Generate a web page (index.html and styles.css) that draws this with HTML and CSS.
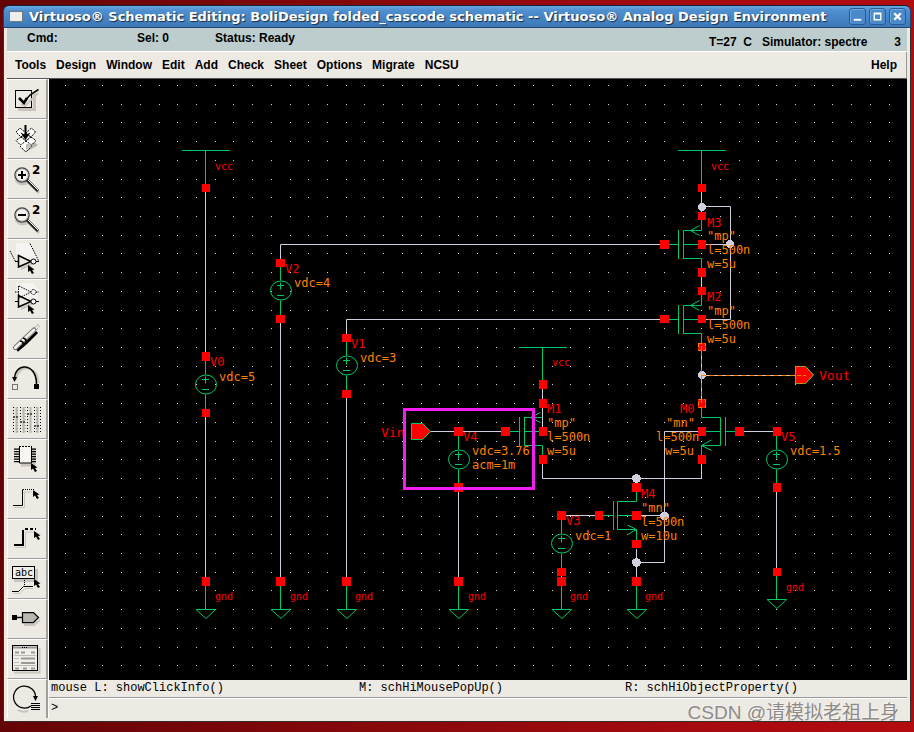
FILE: index.html
```html
<!DOCTYPE html>
<html lang="en">
<head>
<meta charset="utf-8">
<title>Virtuoso Schematic Editing</title>
<link rel="stylesheet" href="styles.css">
</head>
<body>
<svg class="defs" width="0" height="0" aria-hidden="true">
  <defs>
    <path id="cursor" d="M0 0L0 7L2 5.500L4 9L6 8L4 5L6.500 4.500Z"/>
    <g id="lens"><path class="shade" d="M21 23L31 33M8 20A8 8 0 0 0 20 22" stroke-width="3"/><circle cx="14" cy="15" r="7" fill="#fff" stroke="#444" stroke-width="1.500"/><circle cx="14" cy="15" r="6" fill="#f6f4ee" stroke="#bbb"/><path d="M19 20L30 31" stroke="#222" stroke-width="3"/><path d="M20 20L30 30" stroke="#fff" stroke-width="1"/></g>
    <g id="vcc"><path d="M-23.500 0H24.500M0 0V34"/></g>
    <g id="vdc"><ellipse cx="0" cy="0" rx="10.500" ry="9.500"/><path d="M-.500 -24V-10M-.500 10V25M-4 -5H3M-.500 -8V-1M-4 5H3"/></g>
    <g id="gnd"><path d="M0 -24V0M-9.500 0H10L.500 9Z"/></g>
    <g id="pmos"><path d="M0 -15V0H-18M0 38V28H-18M-18 0V28.500M-23 -.500V28.500M-33 14H-23M-18 14H-3M-2 -5L-11 0L-2 5"/></g>
  </defs>
</svg>
<div class="window">
  <header class="titlebar">
    <span class="app-icon"></span>
    <h1 class="title">Virtuoso® Schematic Editing: BoliDesign folded_cascode schematic -- Virtuoso® Analog Design Environment</h1>
    <button class="win-btn" aria-label="Minimize"><svg viewBox="0 0 16 16"><path d="M4 11.500H12" stroke="#fff" stroke-width="2"/></svg></button>
    <button class="win-btn" aria-label="Maximize"><svg viewBox="0 0 16 16"><path d="M4.500 4.500H11.500V11.500H4.500ZM4 5H12" fill="none" stroke="#fff" stroke-width="1.500"/></svg></button>
    <button class="win-btn" aria-label="Close"><svg viewBox="0 0 16 16"><path d="M4.500 4.500L11.500 11.500M11.500 4.500L4.500 11.500" stroke="#fff" stroke-width="2.500"/></svg></button>
  </header>
  <div class="frame">
    <div class="status">
      <span class="s-cmd">Cmd:</span><span class="s-sel">Sel: 0</span><span class="s-status">Status: Ready</span>
      <span class="s-right"><span>T=27&nbsp; C</span><span>Simulator: spectre</span><span class="s-num">3</span></span>
    </div>
    <nav class="menubar">
      <button>Tools</button><button>Design</button><button>Window</button><button>Edit</button><button>Add</button><button>Check</button><button>Sheet</button><button>Options</button><button>Migrate</button><button>NCSU</button><button class="help">Help</button>
    </nav>
    <div class="body">
      <div class="tools">
        <button aria-label="Check and Save"><svg viewBox="0 0 38 38"><path class="shade" d="M10 29.500H26.500V14" stroke-width="3"/><rect x="7.500" y="10.500" width="16" height="17" fill="none" stroke="#000"/><path class="shade" d="M13 24L17 26L30 13" stroke-width="2"/><path d="M11 18L16 23L19 18" fill="none" stroke="#000" stroke-width="2.500"/><path d="M16 22L22 15L30.500 9.500" fill="none" stroke="#000" stroke-width="1.500"/></svg></button>
        <button aria-label="Save"><svg viewBox="0 0 38 38"><path d="M20 31L30 25L26 22L18 27Z" fill="#b5b2ac"/><g fill="#fff" stroke="#000" stroke-dasharray="2 1"><path d="M8 12L12 8L18 13L13 17Z"/><path d="M27.500 12L23.500 8L18 13L23 17Z"/><path d="M13 17L18 14L23 17L18 21Z"/><path d="M12.500 23V27L18 32L23 27V23L18 20Z"/><path d="M13 17L8 20.500L12.500 25L18 21Z"/><path d="M23 17L28 20.500L23.500 25L18 21Z"/></g><path d="M18 24V31L22.500 27V24Z" fill="#c4c1bb"/><path d="M17.500 5V16" stroke="#000" stroke-width="2"/><path d="M12.500 12.500L17.500 20L22.500 12.500L17.500 15Z"/></svg></button>
        <button aria-label="Zoom in by 2"><svg viewBox="0 0 38 38"><use href="#lens"/><path d="M10 15H18M14 11V19" stroke="#000" stroke-width="2"/><text class="i-num" x="24" y="14">2</text></svg></button>
        <button aria-label="Zoom out by 2"><svg viewBox="0 0 38 38"><use href="#lens"/><path d="M10 15H18" stroke="#000" stroke-width="2"/><text class="i-num" x="24" y="14">2</text></svg></button>
        <button aria-label="Stretch"><svg viewBox="0 0 38 38"><path d="M9 3V15M11 3V15M13 3V16M15 3V18M17 3V18M19 3V19M21 3V19M23 6V18M25 10V19M27 14V19" stroke="#fff"/><path class="shade" d="M13 29L25 23" stroke-width="2"/><path d="M10.500 15.500V27L23 21.500Z" fill="none" stroke="#000" stroke-width="1.500"/><circle cx="25.500" cy="21.500" r="2.500" fill="#fff" stroke="#000"/><path d="M2 11L7.500 21.500M22 3.500L30.500 20.500" stroke="#000" stroke-dasharray="1.500 1"/><path d="M7 21.500H11M28 21.500H31" stroke="#000"/><use href="#cursor" x="20" y="25"/></svg></button>
        <button aria-label="Copy"><svg viewBox="0 0 38 38"><path d="M9 3V14M11 3V14M13 3V16M15 3V18M17 3V18M19 3V19M21 3V19M23 3V18M25 3V19M27 5V19M29 8V19" stroke="#fff"/><path d="M10.500 6V18M11 6L23 12L11 18M7 12H11M28 12H31" fill="none" stroke="#000" stroke-dasharray="1.500 1"/><circle cx="25.500" cy="12" r="2.500" fill="none" stroke="#000" stroke-dasharray="1.500 1"/><path class="shade" d="M13 29L25 23" stroke-width="2"/><path d="M10.500 15.500V27L23 21.500Z" fill="none" stroke="#000" stroke-width="1.500"/><circle cx="25.500" cy="21.500" r="2.500" fill="#fff" stroke="#000"/><path d="M7 21.500H11M28 21.500H31" stroke="#000"/><use href="#cursor" x="20" y="25"/></svg></button>
        <button aria-label="Delete"><svg viewBox="0 0 38 38"><path d="M9 30.500L18 23L29 12" fill="none" stroke="#000" stroke-width="3"/><path d="M7.500 27.500L26 10" stroke="#777" stroke-width="5" stroke-linecap="round"/><path d="M7.500 27.500L26 10" stroke="#f6f4ee" stroke-width="3" stroke-linecap="round"/><path d="M9 28L27 11" stroke="#aaa7a1"/><path d="M26 8L31 4M28 10L32 6" stroke="#777" stroke-dasharray="1 1"/><path d="M12 21Q16 21 15 26M15 18Q19 19 18 23" fill="none" stroke="#000" stroke-width="1.500"/></svg></button>
        <button aria-label="Undo"><svg viewBox="0 0 38 38"><path class="shade" d="M8 20C9 4 30 4 30.500 23" stroke-width="2"/><path d="M6.500 20C6 2 28.500 2 28.500 24" fill="none" stroke="#000" stroke-width="1.500"/><path d="M4 17H9L6.500 22Z"/><rect x="4.500" y="24.500" width="5" height="5" fill="none" stroke="#000" stroke-dasharray="1 1"/><rect x="26" y="24" width="5" height="5"/></svg></button>
        <button aria-label="Property"><svg viewBox="0 0 38 38"><g stroke-dasharray="1 2"><path d="M5.500 7V33M12.500 7V33M19.500 7V33M26.500 7V33M32.500 7V33" stroke="#000"/><path d="M28.500 7V33M17 7V33M9.500 7V33" stroke="#777"/></g><path d="M8.500 7V33M15.500 7V33M22.500 7V33M29.500 7V33" stroke="#b9b6b0" stroke-width="2"/><path d="M5 17H10M12 22H17M19 14H24M26 26H32" stroke="#555" stroke-width="2" stroke-dasharray="2 1"/></svg></button>
        <button aria-label="Instance"><svg viewBox="0 0 38 38"><path class="shade" d="M13 25H26V8" stroke-width="3"/><path d="M6 9H11M6 11.500H11M6 14H11M6 16.500H11M6 19H11M6 21.500H11M24 9H28M24 11.500H28M24 14H28M24 16.500H28M24 19H28M24 21.500H28" stroke="#000" stroke-width="1.250"/><path d="M11.500 6V23H23.500V6" fill="#f7f6f1" stroke="#000"/><path d="M11 6.500H24" stroke="#000" stroke-dasharray="2 1"/><use href="#cursor" x="23" y="23"/></svg></button>
        <button aria-label="Wire narrow"><svg viewBox="0 0 38 38"><path class="shade" d="M6 27.500H16.500V12H24"/><path d="M5 25.500H14.500V9.500" fill="none" stroke="#000"/><path d="M15 9.500H26" stroke="#000" stroke-dasharray="1 1"/><use href="#cursor" x="25" y="10"/></svg></button>
        <button aria-label="Wire wide"><svg viewBox="0 0 38 38"><path class="shade" d="M7 27.500H17.500V12H26"/><path d="M6 25H15V10" fill="none" stroke="#000" stroke-width="2"/><path d="M17 9H28" stroke="#000" stroke-width="2" stroke-dasharray="3 2"/><use href="#cursor" x="26" y="11"/></svg></button>
        <button aria-label="Wire name"><svg viewBox="0 0 38 38"><path class="shade" d="M6 20.500H28.500V9" stroke-width="3"/><rect x="4.500" y="6.500" width="22" height="12" fill="#f1eee8" stroke="#000"/><text class="i-abc" x="7" y="16">abc</text><path class="shade" d="M6 33.500H12L17 28.500H25"/><path d="M16.500 20V26" stroke="#000" stroke-dasharray="1 1"/><path d="M4 31.500H10.500L15.500 26.500H25" fill="none" stroke="#000"/><use href="#cursor" x="26" y="19"/></svg></button>
        <button aria-label="Pin"><svg viewBox="0 0 38 38"><path class="shade" d="M16 25H26L32 20" stroke-width="2"/><path d="M9 17.500H14" stroke="#000" stroke-width="1.500"/><rect x="4" y="15" width="5" height="5"/><path d="M14.500 12.500H25.500L30.500 17.500L25.500 22.500H14.500Z" fill="#bab7b0" stroke="#000" stroke-width="1.250"/></svg></button>
        <button aria-label="Command options"><svg viewBox="0 0 38 38"><path class="shade" d="M6 32.500H31.500V8" stroke-width="2"/><rect x="4.500" y="5.500" width="25" height="25" fill="#f1eee8" stroke="#000"/><path d="M5 7.500H29M7 12.500H11M13 12.500H17M23 12.500H27M13 18.500H27M13 23H27M7 28.500H11M15 28.500H19M23 28.500H27" stroke="#999" stroke-width="2"/><path d="M6 15.500H28M6 25.500H28M6 18.500H11M6 22.500H11" stroke="#bbb"/><path d="M14 7.500H20" stroke="#000" stroke-dasharray="1 1"/></svg></button>
        <button aria-label="Repeat"><svg viewBox="0 0 38 38"><path class="shade" d="M10 30A12 12 0 0 0 20 31" stroke-width="2"/><path d="M23 26A11 11 0 1 1 27.500 18" fill="none" stroke="#000" stroke-width="1.250"/><path d="M25 16H30L27.500 21Z"/><path d="M23 23.500H32M23 25.500H32M23 27.500H32M23 29.500H32" stroke="#000"/></svg></button>
      </div>
      <div class="work">
        <svg class="schematic" viewBox="49 79 858 601" role="img" aria-label="Folded cascode schematic">
          <path id="grid" class="dots"/>
          <g class="wire">
            <path d="M205.500 192V352M205.500 417V577M280.500 259V244.500H660M280.500 323V577M346.500 334V319.500H660M346.500 398V577"/>
            <path d="M430 431.500H501M458.500 492V577M542.500 389V427M542.500 464V478.500H701.500V464"/>
            <path d="M701.500 192V212M701.500 276V287M701.500 206.500H730.500V319.500H706M706 244.500H730M701.500 351V399M701.500 375.500H795"/>
            <path d="M698 431.500H664.500V562.500H636.500M641 515.500H664M636.500 549V577M636.500 478V483M566 515.500H595M744 431.500H773M776.500 492V568M561.500 575V579"/>
          </g>
          <g class="sym">
            <use href="#vcc" x="205.500" y="150.500"/><use href="#vcc" x="701.500" y="150.500"/><use href="#vcc" x="542.500" y="347.500"/>
            <use href="#vdc" x="206" y="384.500"/><use href="#vdc" x="281" y="290.500"/><use href="#vdc" x="347" y="365.500"/><use href="#vdc" x="459" y="459.500"/><use href="#vdc" x="777" y="459.500"/><use href="#vdc" x="562" y="543.500"/>
            <use href="#gnd" x="205.500" y="609.500"/><use href="#gnd" x="280.500" y="609.500"/><use href="#gnd" x="346.500" y="609.500"/><use href="#gnd" x="458.500" y="609.500"/><use href="#gnd" x="561.500" y="609.500"/><use href="#gnd" x="636.500" y="609.500"/><use href="#gnd" x="776.500" y="599.500"/>
            <use href="#pmos" x="701.500" y="230.500"/><use href="#pmos" x="701.500" y="305.500"/>
            <path d="M542.500 417.500H524.500M542.500 455V445.500H524.500M524.500 417V446M519.500 417V446M510 431.500H519.500M524.500 431.500H540M540.500 412.500L530.500 417.500L540.500 422.500"/>
            <path d="M701.500 408V417.500H720.500V445.500H701.500V455M725.500 417V446M725.500 431.500H735M706 431.500H720.500M711.500 440L701.500 445.500L711.500 450.500"/>
            <path d="M636.500 492V501.500H617.500V529.500H636.500V540M613.500 501V530M603 515.500H613.500M617.500 515.500H632M627.500 525L636.500 529.500L627.500 534.500"/>
          </g>
          <g class="node">
            <circle cx="702" cy="207" r="4"/><circle cx="730" cy="244" r="4"/><circle cx="702" cy="375" r="4"/><circle cx="636.500" cy="478.500" r="4.500"/><circle cx="664.500" cy="516" r="4.500"/><circle cx="636.500" cy="562.500" r="4.500"/>
          </g>
          <path class="probe" d="M701.500 351V399M701.500 375.500H795"/>
          <path class="pin" d="M202 184h8v8h-8zM202 352h8v9h-8zM202 409h8v8h-8zM202 577h8v9h-8zM276 259h9v8h-9zM276 315h9v8h-9zM276 577h9v9h-9zM342 334h9v8h-9zM342 390h9v8h-9zM342 577h9v9h-9zM454 427h9v9h-9zM454 483h9v9h-9zM454 577h9v9h-9zM501 427h9v9h-9zM539 380h8v9h-8zM539 399h8v9h-8zM539 427h8v9h-8zM539 455h8v9h-8zM773 427h8v9h-8zM773 483h8v9h-8zM773 568h8v8h-8zM735 427h9v9h-9zM698 399h8v9h-8zM698 427h8v9h-8zM698 455h8v9h-8zM595 511h8v9h-8zM632 483h9v9h-9zM632 511h9v9h-9zM632 540h9v8h-9zM632 577h9v9h-9zM557 511h9v9h-9zM557 568h9v8h-9zM557 577h9v9h-9zM698 184h8v8h-8zM698 212h8v8h-8zM698 240h8v9h-8zM698 268h8v9h-8zM660 240h9v9h-9zM698 287h8v8h-8zM698 315h8v8h-8zM698 343h8v8h-8zM660 315h9v8h-9z"/>
          <path class="probe-box" d="M698.500 343.500h7v7h-7zM698.500 399.500h7v8h-7zM701.500 346V351M701.500 399V403"/>
          <path class="port" d="M411.500 423.500H422.500L430.500 431.500L422.500 439.500H411.500Z"/>
          <path class="port" d="M795.500 366.500H805.500L813.500 375L805.500 383.500H795.500Z"/>
          <path class="probe-box" d="M795.500 366.500H805.500L813.500 375L805.500 383.500H795.500ZM797 375.500H806"/>
          <rect class="mark" x="404.500" y="409.500" width="129" height="79"/>
          <g class="name">
            <text x="210" y="366">V0</text><text x="285" y="273">V2</text><text x="351" y="348">V1</text><text x="463" y="441">V4</text><text x="781" y="441">V5</text><text x="566" y="525">V3</text>
            <text x="547" y="413">M1</text><text x="707" y="227">M3</text><text x="707" y="301">M2</text><text x="680" y="413">M0</text><text x="641" y="498">M4</text>
          </g>
          <g class="name port-name"><text x="381" y="437">Vin</text><text x="819" y="380">Vout</text></g>
          <g class="name net">
            <text x="215" y="170">vcc</text><text x="711" y="170">vcc</text><text x="552" y="366">vcc</text>
            <text x="215" y="600">gnd</text><text x="290" y="600">gnd</text><text x="355" y="600">gnd</text><text x="468" y="600">gnd</text><text x="570" y="600">gnd</text><text x="645" y="600">gnd</text><text x="786" y="591">gnd</text>
          </g>
          <g class="value">
            <text x="219" y="381">vdc=5</text><text x="294" y="287">vdc=4</text><text x="360" y="362">vdc=3</text><text x="472" y="455">vdc=3.76</text><text x="472" y="469">acm=1m</text><text x="790" y="455">vdc=1.5</text><text x="575" y="540">vdc=1</text>
            <text x="547" y="427">"mp"</text><text x="547" y="441">l=500n</text><text x="547" y="455">w=5u</text>
            <text x="707" y="240">"mp"</text><text x="707" y="254">l=500n</text><text x="707" y="268">w=5u</text>
            <text x="707" y="315">"mp"</text><text x="707" y="329">l=500n</text><text x="707" y="343">w=5u</text>
            <text x="666" y="427">"mn"</text><text x="656" y="441">l=500n</text><text x="665" y="455">w=5u</text>
            <text x="641" y="512">"mn"</text><text x="641" y="526">l=500n</text><text x="641" y="540">w=10u</text>
          </g>
        </svg>
        <div class="hints"><span>mouse L: showClickInfo()</span><span>M: schHiMousePopUp()</span><span>R: schHiObjectProperty()</span></div>
        <div class="prompt"><label for="cmd">&gt;</label><input id="cmd" type="text"></div>
      </div>
    </div>
  </div>
</div>
<div class="watermark">CSDN @请模拟老祖上身</div>
<script src="grid.js"></script>
</body>
</html>
```
FILE: grid.js
```js
// Snap grid: one pixel dot every 18.72 units, rounded to whole pixels.
const STEP = 18.72;
let d = "";
for (let r = 0; r < 32; r++) {
  for (let c = 0; c < 45; c++) {
    d += "M" + Math.floor(65.45 + c * STEP) + " " + (Math.floor(85.45 + r * STEP) + 0.5) + "h1";
  }
}
document.getElementById("grid").setAttribute("d", d);
```
FILE: styles.css
```css
* { box-sizing: border-box; }
body {
  margin: 0;
  height: 100vh;
  padding: 5px 3px 10px;
  display: flex;
  flex-direction: column;
  position: relative;
  background: linear-gradient(90deg, #640406, #86080b 40%, #a80a0f 80%, #b30b10);
  font-family: "Liberation Sans", sans-serif;
  color: #000;
}
button { font: inherit; color: inherit; border: 0; padding: 0; background: none; }
.defs { position: absolute; }
.window { flex: 1; min-height: 0; display: flex; flex-direction: column; }

.titlebar {
  display: flex;
  align-items: center;
  gap: 3px;
  height: 23px;
  padding: 0 4px 0 5px;
  border: 1px solid #1f4470;
  border-top-color: #123;
  border-radius: 6px 6px 0 0;
  background: linear-gradient(#6aa6e0, #4f90d0 20%, #3c78b8);
}
.app-icon { width: 14px; height: 11px; background: #eee; border: 1px solid #777; flex: none; }
.title {
  flex: 1;
  min-width: 0;
  margin: 0 0 0 3px;
  overflow: hidden;
  white-space: nowrap;
  font: bold 13px/20px "DejaVu Sans", sans-serif;
  color: #fff;
  text-shadow: 1px 1px 1px #1a2c44;
}
.win-btn { width: 17px; height: 17px; flex: none; border: 1px solid #2a5a92; border-radius: 3px; background: #4a8acb; box-shadow: inset 1px 1px 0 #6ea8e0; }
.win-btn svg { display: block; width: 15px; height: 15px; }

.frame {
  flex: 1;
  min-height: 0;
  display: flex;
  flex-direction: column;
  padding: 0 3px 3px;
  background: #ede9e3;
  border: solid #33302c;
  border-width: 0 1px 1px;
}
.status { display: flex; height: 24px; background: #bdcdcd; border-bottom: 1px solid #fff; font-weight: bold; font-size: 12px; line-height: 20px; }
.s-cmd { width: 130px; padding-left: 20px; }
.s-sel { width: 78px; }
.s-right { display: flex; gap: 10px; margin-left: auto; padding: 4px 6px 0 0; }
.s-num { padding-left: 17px; }
.menubar { display: flex; gap: 10px; height: 27px; padding: 0 9px 0 8px; border-bottom: 1px solid #555; border-right: 1px solid #999; font-weight: bold; font-size: 12px; }
.help { margin-left: auto; }

.body { flex: 1; min-height: 0; display: grid; grid-template-columns: 42px 1fr; }
.tools { display: flex; flex-direction: column; overflow: hidden; border-right: 1px solid #fff; }
.tools button { flex: none; height: 40px; width: 41px; border: solid; border-width: 1px 2px 1px 1px; border-color: #fff #a19d98 #a19d98 #fff; }
.tools svg { display: block; width: 38px; height: 38px; }
.shade { fill: none; stroke: #c9c5be; }
.i-num { font: bold 12px "DejaVu Sans", sans-serif; }
.i-abc { font: 10px "DejaVu Sans Mono", monospace; }

.work { min-width: 0; min-height: 0; display: flex; flex-direction: column; }
.schematic { display: block; flex: 1; min-height: 0; width: 100%; background: #000; font-family: "DejaVu Sans Mono", monospace; font-size: 12px; }
.dots { stroke: #d4d8ee; fill: none; shape-rendering: crispEdges; }
.wire { stroke: #cfcfdd; fill: none; }
.sym { stroke: #00c864; fill: none; }
.probe { stroke: #ff8000; fill: none; stroke-dasharray: 5 3; }
.probe-box { stroke: #ff8000; fill: none; stroke-dasharray: 4 2; }
.node { fill: #d0d0de; shape-rendering: crispEdges; }
.pin { fill: #f00; }
.port { fill: #f00; stroke: #00c864; }
.mark { fill: none; stroke: #f41ef0; stroke-width: 3; }
.name { fill: #ff0000; }
.port-name { font-size: 13px; }
.net { font-size: 10px; }
.value { fill: #ff8000; }

.hints { display: grid; grid-template-columns: 308fr 266fr 282fr; height: 18px; padding-left: 2px; border-bottom: 1px solid #999; font: 12px/17px "Liberation Mono", monospace; white-space: nowrap; }
.prompt { display: flex; height: 20px; padding-left: 2px; border-top: 1px solid #fff; font: 12px/18px "Liberation Mono", monospace; }
.prompt input { flex: 1; border: 0; padding: 0 4px; background: none; font: inherit; outline: 0; }

.watermark {
  position: absolute;
  right: 15px;
  bottom: 5px;
  font: 19px/28px "Liberation Sans", "Noto Sans CJK SC", sans-serif;
  color: #8e8b88;
  text-shadow: -1px -1px 0 #fff8;
  pointer-events: none;
}
```
